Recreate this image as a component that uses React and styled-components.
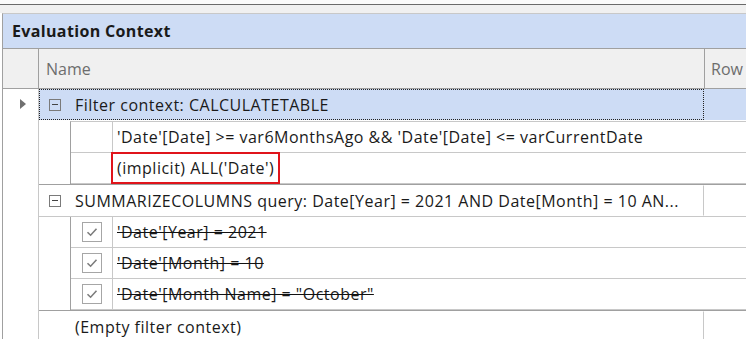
import React from 'react';
import styled, { createGlobalStyle } from 'styled-components';

const GlobalStyle = createGlobalStyle`
    body {
        margin: 0;
        background: #ffffff;
        font-family: 'Open Sans', 'Noto Sans', sans-serif;
        color: #1a1a1a;
    }
`;

// the grid shows the long query already shortened with an ellipsis
const parentRows = [
    {
        label: 'Filter context: CALCULATETABLE',
        selected: true,
        children: [
            { text: "'Date'[Date] >= var6MonthsAgo && 'Date'[Date] <= varCurrentDate" },
            { text: "(implicit) ALL('Date')", marked: true },
        ],
    },
    {
        label: 'SUMMARIZECOLUMNS query: Date[Year] = 2021 AND Date[Month] = 10 AN...',
        children: [
            { text: "'Date'[Year] = 2021", checked: true },
            { text: "'Date'[Month] = 10", checked: true },
            { text: "'Date'[Month Name] = \"October\"", checked: true },
        ],
    },
];

const App = () => {
    return (
        <Window>
            <GlobalStyle />
            <TopRule />
            <Band />
            <Panel>
                <Title>Evaluation Context</Title>
                <HeaderRow>
                    <CornerHead />
                    <NameHead>Name</NameHead>
                    <RowHead>Row</RowHead>
                </HeaderRow>
                <Body>
                    <Indicators>
                        <ArrowSlot>
                            <Arrow />
                        </ArrowSlot>
                    </Indicators>
                    <Rows>
                        {parentRows.map((row, i) => (
                            <Group key={i}>
                                <ParentRow selected={row.selected}>
                                    <NameCell selected={row.selected}>
                                        <Toggle />
                                        <Label>{row.label}</Label>
                                    </NameCell>
                                    <RowCell />
                                </ParentRow>
                                <ChildTable topRule={row.selected}>
                                    {row.children.map((c, j) => (
                                        <ChildRow key={j}>
                                            <CheckCell>
                                                {c.checked && (
                                                    <CheckBox>
                                                        <svg width="12" height="10" viewBox="0 0 12 10">
                                                            <path d="M1.5 5.2 L4.6 8.2 L10.5 1.8" fill="none" stroke="#7c7c7c" strokeWidth="1.6" />
                                                        </svg>
                                                    </CheckBox>
                                                )}
                                            </CheckCell>
                                            <ChildText>
                                                {c.marked ? (
                                                    <Marked>{c.text}</Marked>
                                                ) : (
                                                    <Expr struck={c.checked}>{c.text}</Expr>
                                                )}
                                            </ChildText>
                                        </ChildRow>
                                    ))}
                                </ChildTable>
                            </Group>
                        ))}
                        <ParentRow>
                            <NameCell>
                                <ToggleSpace />
                                <Label>(Empty filter context)</Label>
                            </NameCell>
                            <RowCell />
                        </ParentRow>
                    </Rows>
                </Body>
            </Panel>
        </Window>
    );
};

const Window = styled.div`
    width: 746px;
    height: 339px;
    overflow: hidden;
    background: #ffffff;
`;

const TopRule = styled.div`
    height: 4px;
    border-bottom: 1px solid #6a6a6a;
    background: #fafafa;
`;

const Band = styled.div`
    height: 8px;
    background: #f0f0f0;
`;

const Panel = styled.div`
    margin-left: 2px;
    width: 900px;
    border-left: 1px solid #a0a0a0;
    border-top: 1px solid #c8c8c8;
`;

const Title = styled.div`
    height: 34px;
    display: flex;
    align-items: center;
    padding-left: 9px;
    background: #cddcf5;
    border-bottom: 1px solid #a0a0a0;
    font-weight: 700;
    font-size: 16px;
    letter-spacing: 0.35px;
    color: #1a1a1a;
`;

const HeaderRow = styled.div`
    display: flex;
    height: 39px;
    background: #f0f0f0;
    border-bottom: 1px solid #a0a0a0;
    font-size: 16px;
    color: #6d6d6d;
`;

const CornerHead = styled.div`
    width: 35px;
    border-right: 1px solid #a0a0a0;
`;

const NameHead = styled.div`
    width: 658px;
    padding-left: 7px;
    display: flex;
    align-items: center;
    border-right: 1px solid #a0a0a0;
`;

const RowHead = styled.div`
    flex: 1;
    padding-left: 6px;
    display: flex;
    align-items: center;
`;

const Body = styled.div`
    display: flex;
`;

const Indicators = styled.div`
    width: 35px;
    flex: none;
    border-right: 1px solid #c8c8c8;
`;

const ArrowSlot = styled.div`
    height: 29px;
    display: flex;
    align-items: center;
    padding-left: 17px;
`;

const Arrow = styled.div`
    width: 0;
    height: 0;
    border-top: 5px solid transparent;
    border-bottom: 5px solid transparent;
    border-left: 6px solid #707070;
`;

const Rows = styled.div`
    flex: 1;
    font-size: 16px;
    letter-spacing: 0.5px;
`;

const Group = styled.div`
    border-bottom: 1px solid #a0a0a0;
`;

const ParentRow = styled.div`
    display: flex;
    height: 31px;
    background: ${(props) => (props.selected ? '#cddcf5' : '#ffffff')};
    border-bottom: 1px solid ${(props) => (props.selected ? '#ffffff' : '#c8c8c8')};
`;

const NameCell = styled.div`
    width: 665px;
    box-sizing: border-box;
    display: flex;
    align-items: center;
    padding-left: 9px;
    padding-top: 1px;
    border: 1px dotted ${(props) => (props.selected ? '#222' : 'transparent')};
    border-right: 1px ${(props) => (props.selected ? 'dotted #222' : 'solid #c8c8c8')};
    white-space: nowrap;
    overflow: hidden;
`;

const RowCell = styled.div`
    flex: 1;
`;

const Toggle = styled.div`
    position: relative;
    flex: none;
    width: 10px;
    height: 10px;
    border: 1px solid #7a7a7a;
    margin-right: 14px;

    &::after {
        content: '';
        position: absolute;
        left: 2px;
        right: 2px;
        top: 4px;
        height: 1px;
        background: #444;
    }
`;

const ToggleSpace = styled.div`
    flex: none;
    width: 26px;
`;

const Label = styled.span`
    white-space: nowrap;
`;

const ChildTable = styled.div`
    margin-left: 31px;
    border-left: 1px solid #a0a0a0;
    border-top: ${(props) => (props.topRule ? '1px solid #c8c8c8' : 'none')};
`;

const ChildRow = styled.div`
    display: flex;
    height: 30px;
    border-bottom: 1px solid #c8c8c8;
`;

const CheckCell = styled.div`
    width: 42px;
    flex: none;
    display: flex;
    align-items: center;
    padding-left: 11px;
    box-sizing: border-box;
    border-right: 1px solid #c8c8c8;
`;

const CheckBox = styled.div`
    width: 18px;
    height: 18px;
    border: 1px solid #a6a6a6;
    background: #ffffff;
    display: flex;
    align-items: center;
    justify-content: center;
`;

const ChildText = styled.div`
    flex: 1;
    display: flex;
    align-items: center;
    padding-left: 4px;
    white-space: nowrap;
`;

const Expr = styled.span`
    text-decoration: ${(props) => (props.struck ? 'line-through' : 'none')};
    text-decoration-color: #111;
`;

const Marked = styled.span`
    margin-left: -6px;
    padding: 3px 4px 3px 4px;
    border: 2px solid #e0141b;
`;

export default App;
